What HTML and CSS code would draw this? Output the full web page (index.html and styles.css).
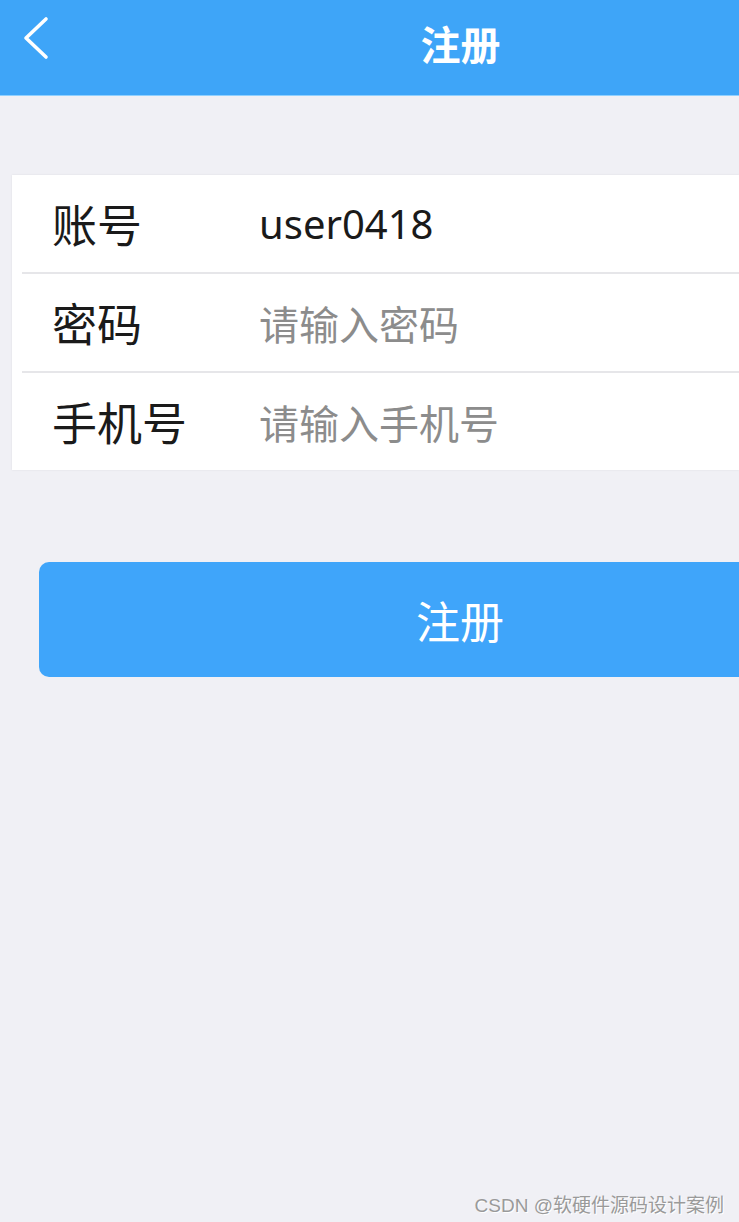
FILE: index.html
```html
<!DOCTYPE html>
<html lang="zh">
<head>
<meta charset="utf-8">
<title>注册</title>
<link rel="stylesheet" href="styles.css">
</head>
<body>
<div class="app">
  <header class="topbar">
    <span class="back">
      <svg width="30" height="44" viewBox="0 0 30 44"><path d="M25 3 L5 22 L25 41" fill="none" stroke="#fff" stroke-width="3.6" stroke-linecap="round" stroke-linejoin="round"/></svg>
    </span>
    <h1 class="title">注册</h1>
  </header>
  <main class="content">
    <section class="card">
      <div class="row">
        <span class="label">账号</span>
        <span class="value">user0418</span>
      </div>
      <div class="row">
        <span class="label">密码</span>
        <span class="value placeholder">请输入密码</span>
      </div>
      <div class="row">
        <span class="label">手机号</span>
        <span class="value placeholder">请输入手机号</span>
      </div>
    </section>
    <button class="submit">注册</button>
  </main>
  <div class="watermark">CSDN @软硬件源码设计案例</div>
</div>
</body>
</html>
```
FILE: styles.css
```css
html, body {
  margin: 0;
  padding: 0;
  overflow: hidden;
  background: #f0f0f5;
}
body {
  width: 739px;
  height: 1222px;
  font-family: "Noto Sans", "Noto Sans CJK SC", sans-serif;
}
.app {
  width: 739px;
  height: 1222px;
  position: relative;
  background: #f0f0f5;
}
.topbar {
  height: 96px;
  background: #3ea5f8;
  display: flex;
  align-items: center;
  justify-content: center;
  padding-left: 182px;
  position: relative;
  border-bottom: 1px solid #8fd0ff;
  box-sizing: border-box;
}
.back {
  position: absolute;
  left: 21px;
  top: 16px;
  display: flex;
}
.title {
  margin: 0;
  color: #fff;
  font-family: "Noto Sans CJK SC", sans-serif;
  font-size: 40px;
  font-weight: 700;
  line-height: 1;
  transform: translateY(-5px);
}
.content {
  padding-top: 79px;
  display: flex;
  flex-direction: column;
}
.card {
  margin-left: 12px;
  background: #fff;
  box-shadow: 0 0 2px rgba(0,0,0,0.08);
  display: flex;
  flex-direction: column;
}
.row {
  height: 97px;
  display: flex;
  align-items: center;
  border-bottom: 2px solid #e6e6e9;
  margin-left: 10px;
  padding-left: 30px;
}
.row:last-child {
  border-bottom: none;
}
.label {
  width: 207px;
  font-family: "Noto Sans CJK SC", sans-serif;
  font-size: 45px;
  color: #1a1a1a;
  line-height: 1;
}
.value {
  font-size: 40px;
  color: #1a1a1a;
  line-height: 1;
}
.placeholder {
  font-family: "Noto Sans CJK SC", sans-serif;
  color: #8c8c8c;
}
.submit {
  margin: 92px 0 0 39px;
  height: 115px;
  border: none;
  border-radius: 10px 0 0 10px;
  background: #3fa5fa;
  color: #fff;
  font-family: "Noto Sans CJK SC", sans-serif;
  font-size: 44px;
  padding: 0 0 0 142px;
}
.watermark {
  position: absolute;
  right: 15px;
  top: 1190px;
  font-family: "Liberation Sans", "Noto Sans CJK SC", sans-serif;
  font-size: 19px;
  color: #9a9a9a;
  text-shadow: 1px 1px 0 #fff;
  white-space: nowrap;
}
```
